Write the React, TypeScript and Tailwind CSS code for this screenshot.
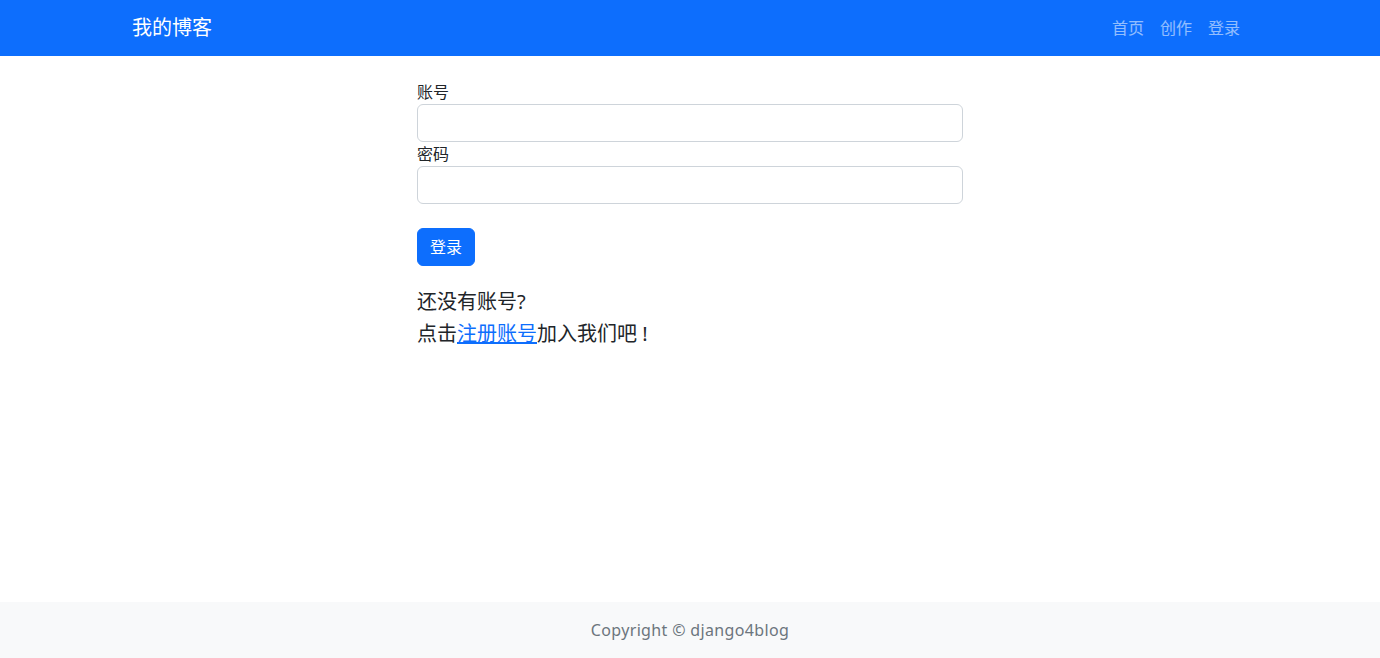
import React from "react";

const font = { fontFamily: '"Segoe UI", "Noto Sans", "Noto Sans CJK SC", sans-serif' };

export default function App() {
  return (
    <div
      className="min-h-screen flex flex-col bg-white text-[#212529] text-base leading-6 font-['Noto_Sans','Noto_Sans_CJK_SC',sans-serif]"
    >
      {/* navbar */}
      <nav className="bg-[#0d6efd] h-14">
        <div className="w-[1140px] mx-auto px-3 h-full flex items-center justify-between">
          <a href="#" className="text-white text-xl leading-[30px]">我的博客</a>
          <ul className="flex items-center">
            <li><a href="#" className="block px-2 text-white/55 text-base">首页</a></li>
            <li><a href="#" className="block px-2 text-white/55 text-base">创作</a></li>
            <li><a href="#" className="block px-2 text-white/55 text-base">登录</a></li>
          </ul>
        </div>
      </nav>

      {/* login form */}
      <main className="flex-1">
        <div className="w-[1140px] mx-auto px-3">
          <div className="w-[546px] ml-[285px] mt-6">
            <form>
              <label className="block">账号</label>
              <input
                type="text"
                className="block w-full h-[38px] px-3 rounded-md border border-[#ced4da] bg-white outline-none"
              />
              <label className="block">密码</label>
              <input
                type="password"
                className="block w-full h-[38px] px-3 rounded-md border border-[#ced4da] bg-white outline-none"
              />
              <button
                type="button"
                className="mt-6 h-[38px] px-3 rounded-md border border-[#0d6efd] bg-[#0d6efd] text-white"
              >
                登录
              </button>
            </form>
            <div className="mt-5 text-xl leading-8">
              <p>还没有账号?</p>
              <p>
                点击<a href="#" className="text-[#0d6efd] underline">注册账号</a>加入我们吧 !
              </p>
            </div>
          </div>
        </div>
      </main>

      {/* footer */}
      <footer className="bg-[#f8f9fa] h-14 flex items-center justify-center">
        <span className="text-[#6c757d] tracking-[0.35px]" style={font}>Copyright © django4blog</span>
      </footer>
    </div>
  );
}
